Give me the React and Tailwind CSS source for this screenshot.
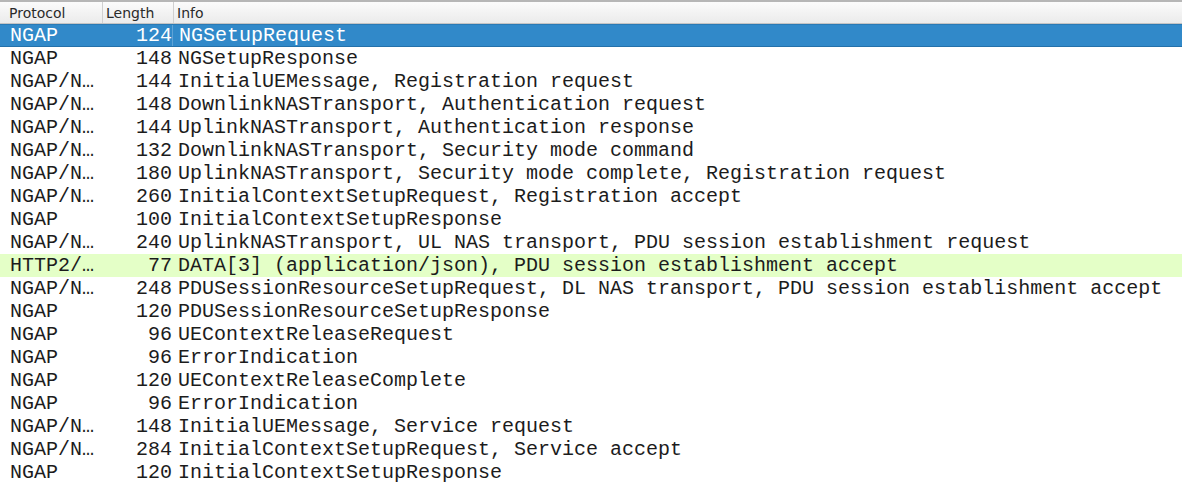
import React from "react";

const rows = [
  ["NGAP", "124", "NGSetupRequest"],
  ["NGAP", "148", "NGSetupResponse"],
  ["NGAP/N…", "144", "InitialUEMessage, Registration request"],
  ["NGAP/N…", "148", "DownlinkNASTransport, Authentication request"],
  ["NGAP/N…", "144", "UplinkNASTransport, Authentication response"],
  ["NGAP/N…", "132", "DownlinkNASTransport, Security mode command"],
  ["NGAP/N…", "180", "UplinkNASTransport, Security mode complete, Registration request"],
  ["NGAP/N…", "260", "InitialContextSetupRequest, Registration accept"],
  ["NGAP", "100", "InitialContextSetupResponse"],
  ["NGAP/N…", "240", "UplinkNASTransport, UL NAS transport, PDU session establishment request"],
  ["HTTP2/…", "77", "DATA[3] (application/json), PDU session establishment accept"],
  ["NGAP/N…", "248", "PDUSessionResourceSetupRequest, DL NAS transport, PDU session establishment accept"],
  ["NGAP", "120", "PDUSessionResourceSetupResponse"],
  ["NGAP", "96", "UEContextReleaseRequest"],
  ["NGAP", "96", "ErrorIndication"],
  ["NGAP", "120", "UEContextReleaseComplete"],
  ["NGAP", "96", "ErrorIndication"],
  ["NGAP/N…", "148", "InitialUEMessage, Service request"],
  ["NGAP/N…", "284", "InitialContextSetupRequest, Service accept"],
  ["NGAP", "120", "InitialContextSetupResponse"],
];

export default function App() {
  return (
    <div className="w-[1182px] h-[490px] bg-white overflow-hidden">
      <div className="flex h-[24px] border-t-2 border-b border-t-[#b6b6b6] border-b-[#c4c4c4] bg-gradient-to-b from-[#fbfbfb] to-[#ebebeb] text-[14px] text-[#2a2a2a] [font-family:'DejaVu_Sans',sans-serif]">
        <div className="w-[103px] pl-[9px] pt-[2px] border-r border-[#d0d0d0] flex items-center">Protocol</div>
        <div className="w-[71px] pl-[3px] pt-[2px] border-r border-[#d0d0d0] flex items-center">Length</div>
        <div className="flex-1 pl-[3px] pt-[2px] flex items-center">Info</div>
      </div>
      <div className="[font-family:'Liberation_Mono',monospace] text-[20px] text-[#1c1c1c]">
        {rows.map((r, i) => {
          const sel = i === 0;
          const green = i === 10;
          return (
            <div
              key={i}
              className={
                "flex h-[23px] items-center whitespace-nowrap " +
                (sel
                  ? "bg-[#3189c9] text-white border-t border-b border-t-[#2a7ab5] border-b-[#2471aa]"
                  : green
                  ? "bg-[#e4ffc7]"
                  : "")
              }
            >
              <div className="w-[103px] pl-[10px]">{r[0]}</div>
              <div className="w-[69px] text-right">{r[1]}</div>
              <div
                className={
                  "flex-1 pl-[6px] h-full flex items-center " +
                  (sel ? "border-l border-[#5fa3d6]" : "")
                }
              >
                {r[2]}
              </div>
            </div>
          );
        })}
      </div>
    </div>
  );
}
